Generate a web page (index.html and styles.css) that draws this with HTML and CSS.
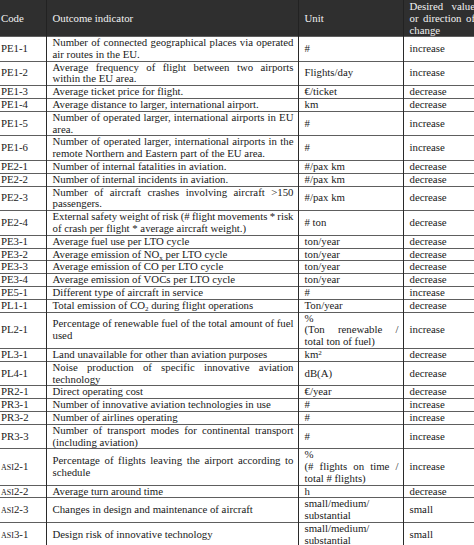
FILE: index.html
```html
<!DOCTYPE html>
<html>
<head>
<meta charset="utf-8">
<link rel="stylesheet" href="styles.css">
</head>
<body>
<table class="tbl">
<colgroup><col class="c1"><col class="c2"><col class="c3"><col class="c4"></colgroup>
<thead>
<tr><th class="code">Code</th><th>Outcome indicator</th><th>Unit</th><th><span class="j">Desired value</span><span class="j">or direction of</span><span class="l">change</span></th></tr>
</thead>
<tbody>
<tr><td class="code">PE1-1</td><td><span class="j">Number of connected geographical places via operated</span><span class="l">air routes in the EU.</span></td><td>#</td><td>increase</td></tr>
<tr><td class="code">PE1-2</td><td><span class="j">Average frequency of flight between two airports</span><span class="l">within the EU area.</span></td><td>Flights/day</td><td>increase</td></tr>
<tr><td class="code">PE1-3</td><td>Average ticket price for flight.</td><td>€/ticket</td><td>decrease</td></tr>
<tr><td class="code">PE1-4</td><td>Average distance to larger, international airport.</td><td>km</td><td>decrease</td></tr>
<tr><td class="code">PE1-5</td><td><span class="j">Number of operated larger, international airports in EU</span><span class="l">area.</span></td><td>#</td><td>increase</td></tr>
<tr><td class="code">PE1-6</td><td><span class="j">Number of operated larger, international airports in the</span><span class="l">remote Northern and Eastern part of the EU area.</span></td><td>#</td><td>increase</td></tr>
<tr><td class="code">PE2-1</td><td>Number of internal fatalities in aviation.</td><td>#/pax km</td><td>decrease</td></tr>
<tr><td class="code">PE2-2</td><td>Number of internal incidents in aviation.</td><td>#/pax km</td><td>decrease</td></tr>
<tr><td class="code">PE2-3</td><td><span class="j">Number of aircraft crashes involving aircraft &gt;150</span><span class="l">passengers.</span></td><td>#/pax km</td><td>decrease</td></tr>
<tr><td class="code">PE2-4</td><td><span class="j">External safety weight of risk (# flight movements * risk</span><span class="l">of crash per flight * average aircraft weight.)</span></td><td># ton</td><td>decrease</td></tr>
<tr><td class="code">PE3-1</td><td>Average fuel use per LTO cycle</td><td>ton/year</td><td>decrease</td></tr>
<tr><td class="code">PE3-2</td><td>Average emission of NO<sub>x</sub> per LTO cycle</td><td>ton/year</td><td>decrease</td></tr>
<tr><td class="code">PE3-3</td><td>Average emission of CO per LTO cycle</td><td>ton/year</td><td>decrease</td></tr>
<tr><td class="code">PE3-4</td><td>Average emission of VOCs per LTO cycle</td><td>ton/year</td><td>decrease</td></tr>
<tr><td class="code">PE5-1</td><td>Different type of aircraft in service</td><td>#</td><td>increase</td></tr>
<tr><td class="code">PL1-1</td><td>Total emission of CO<sub>2</sub> during flight operations</td><td>Ton/year</td><td>decrease</td></tr>
<tr><td class="code">PL2-1</td><td><span class="j">Percentage of renewable fuel of the total amount of fuel</span><span class="l">used</span></td><td><span class="l">%</span><span class="j">(Ton renewable /</span><span class="l">total ton of fuel)</span></td><td>increase</td></tr>
<tr><td class="code">PL3-1</td><td>Land unavailable for other than aviation purposes</td><td>km<sup>2</sup></td><td>decrease</td></tr>
<tr><td class="code">PL4-1</td><td><span class="j">Noise production of specific innovative aviation</span><span class="l">technology</span></td><td>dB(A)</td><td>decrease</td></tr>
<tr><td class="code">PR2-1</td><td>Direct operating cost</td><td>€/year</td><td>decrease</td></tr>
<tr><td class="code">PR3-1</td><td>Number of innovative aviation technologies in use</td><td>#</td><td>increase</td></tr>
<tr><td class="code">PR3-2</td><td>Number of airlines operating</td><td>#</td><td>increase</td></tr>
<tr><td class="code">PR3-3</td><td><span class="j">Number of transport modes for continental transport</span><span class="l">(including aviation)</span></td><td>#</td><td>increase</td></tr>
<tr><td class="code"><span class="sc">asi</span>2-1</td><td><span class="j">Percentage of flights leaving the airport according to</span><span class="l">schedule</span></td><td><span class="l">%</span><span class="j">(# flights on time /</span><span class="l">total # flights)</span></td><td>increase</td></tr>
<tr><td class="code"><span class="sc">asi</span>2-2</td><td>Average turn around time</td><td>h</td><td>decrease</td></tr>
<tr><td class="code"><span class="sc">asi</span>2-3</td><td>Changes in design and maintenance of aircraft</td><td><span class="l">small/medium/</span><span class="l">substantial</span></td><td>small</td></tr>
<tr><td class="code"><span class="sc">asi</span>3-1</td><td>Design risk of innovative technology</td><td><span class="l">small/medium/</span><span class="l">substantial</span></td><td>small</td></tr>
</tbody>
</table>
</body>
</html>
```
FILE: styles.css
```css
html, body {
  margin: 0;
  padding: 0;
  overflow: hidden;
  background: #ffffff;
}
body {
  width: 474px;
  height: 545px;
  font-family: "Liberation Serif", "Times New Roman", serif;
  font-size: 10.8px;
  color: #1a1a1a;
}
.tbl {
  border-collapse: collapse;
  table-layout: fixed;
  width: 480px;
  line-height: 11.8px;
}
.c1 { width: 46px; }
.c2 { width: 252px; }
.c3 { width: 105px; }
.c4 { width: 77px; }
.tbl th {
  background: #2f2f2f;
  color: #f2f2f2;
  font-weight: normal;
  text-align: left;
  height: 35px;
  padding: 0 5px 0 6px;
  vertical-align: middle;
  border-left: 1px solid #222;
  line-height: 12px;
}
.tbl td {
  padding: 0 4px 0 6px;
  vertical-align: middle;
  border-top: 1px solid #5e5e5e;
  border-left: 1px solid #2a2a2a;
  text-align: left;
}
.tbl .code {
  padding-left: 1px;
  padding-right: 2px;
  border-left: none;
}
.j {
  display: block;
  white-space: nowrap;
  text-align: justify;
  text-align-last: justify;
  word-spacing: -0.7px;
}
.l {
  display: block;
  white-space: nowrap;
}
.sc {
  font-variant: small-caps;
}
sub, sup {
  font-size: 7px;
  line-height: 0;
}
sub { vertical-align: -2px; }
sup { vertical-align: 3px; }
```
